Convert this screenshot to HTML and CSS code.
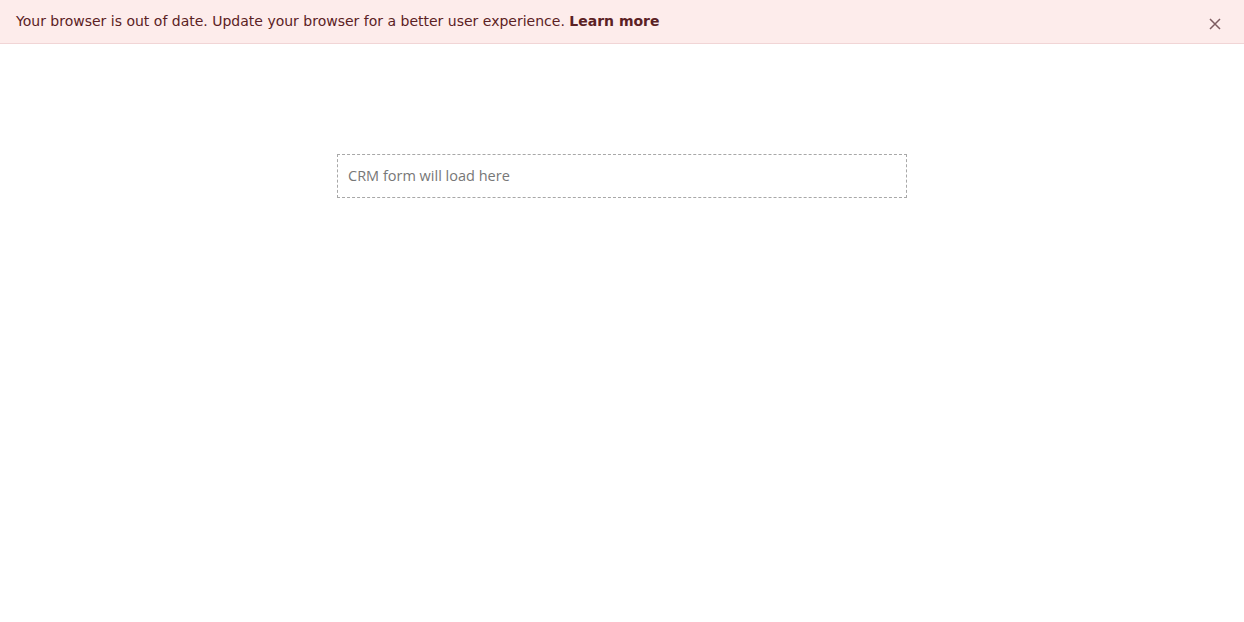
FILE: index.html
```html
<!DOCTYPE html>
<html>
<head>
  <title>Contact</title>
  <link rel="stylesheet" href="styles.css">
</head>
<body>
  <div class="banner">
    <p class="banner-text">Your browser is out of date. Update your browser for a better user experience. <a href="#" class="banner-link">Learn more</a></p>
    <button class="banner-close" aria-label="Close">
      <svg width="12" height="12" viewBox="0 0 12 12">
        <path d="M1 1 L11 11 M11 1 L1 11" stroke="#7d5c60" stroke-width="1.5" fill="none"/>
      </svg>
    </button>
  </div>

  <div id="container">
    <div class="crm-form">CRM form will load here</div>
  </div>
</body>
</html>
```

FILE: styles.css
```css
body {
  margin: 0;
  font-family: "DejaVu Sans", sans-serif;
  background: #fff;
}
.banner {
  display: flex;
  align-items: center;
  justify-content: space-between;
  height: 43px;
  padding: 0 16px;
  background-color: #fdeceb;
  border-bottom: 1px solid #f1d5d6;
  color: #5b2124;
}
.banner-text {
  margin: 0;
  font-size: 14px;
  margin-top: -2px;
}
.banner-link {
  color: #5b2124;
  font-weight: bold;
  text-decoration: none;
}
.banner-close {
  background: none;
  border: none;
  padding: 0;
  margin-right: 7px;
  margin-top: 4px;
  cursor: pointer;
  display: flex;
}
#container {
  display: flex;
  justify-content: center;
  padding-top: 110px;
}
.crm-form {
  box-sizing: border-box;
  width: 570px;
  height: 44px;
  display: flex;
  align-items: center;
  padding: 0 10px 1px;
  border: 1px dashed #a8a8a8;
  color: #777;
  font-family: "Open Sans", sans-serif;
  font-size: 14.5px;
}
```
